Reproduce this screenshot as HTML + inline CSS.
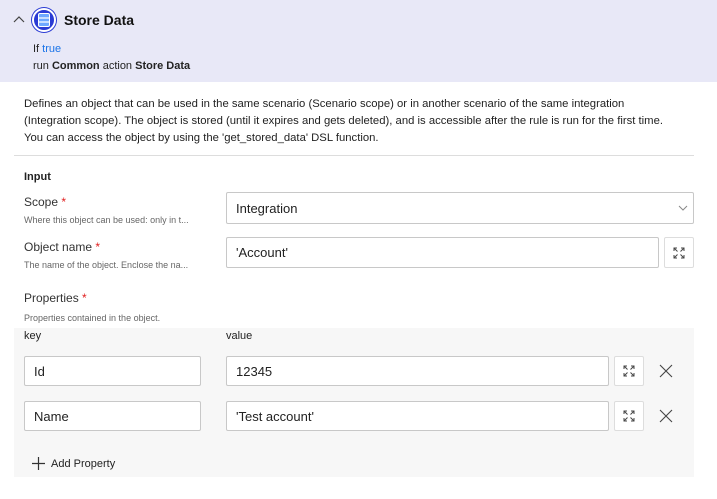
<!DOCTYPE html>
<html><head><style>
*{box-sizing:border-box;margin:0;padding:0}
body{width:717px;height:499px;background:#fff;font-family:"Liberation Sans",sans-serif;color:#222;position:relative;overflow:hidden}
.a{position:absolute}
.hdr{left:0;top:0;width:717px;height:82px;background:#e8e8f7}
.box{position:absolute;border:1px solid #c8c8c8;border-radius:2px;background:#fff;font-size:13px;padding-left:9px;display:flex;align-items:center;color:#222}
.btn{position:absolute;border:1px solid #ddd;border-radius:2px;background:#fff;display:flex;align-items:center;justify-content:center}
.lbl{font-size:12px;color:#333}
.sub{font-size:9px;color:#666}
.req{color:#e02020}
</style></head><body>
<div class="a hdr"></div>
<svg class="a" style="left:13px;top:14px" width="12" height="10" viewBox="0 0 12 10"><path d="M1 8L6 3L11 8" fill="none" stroke="#444" stroke-width="1.2"/></svg>
<div class="a" style="left:32px;top:8px;width:24px;height:24px;border-radius:50%;background:#2a3bd4;border:2px solid #fff;box-shadow:0 0 0 1px #2a3bd4"></div>
<svg class="a" style="left:38px;top:13px" width="12" height="14" viewBox="0 0 12 14"><rect x="0.5" y="0.5" width="11" height="13" rx="1.5" fill="#6ea8ff" stroke="#fff"/><path d="M1 5H11M1 9H11" stroke="#fff" stroke-width="1.2"/></svg>
<div class="a" style="left:64px;top:12px;font-size:14px;font-weight:bold;color:#111">Store Data</div>
<div class="a" style="left:33px;top:43px;font-size:11px">If <span style="color:#1a73e8">true</span></div>
<div class="a" style="left:33px;top:60px;font-size:11px">run <b>Common</b> action <b>Store Data</b></div>
<div class="a" style="left:24px;top:96px;font-size:11.3px;line-height:17px;white-space:nowrap;color:#222">Defines an object that can be used in the same scenario (Scenario scope) or in another scenario of the same integration<br>(Integration scope). The object is stored (until it expires and gets deleted), and is accessible after the rule is run for the first time.<br>You can access the object by using the 'get_stored_data' DSL function.</div>
<div class="a" style="left:14px;top:155px;width:680px;height:1px;background:#ddd"></div>
<div class="a" style="left:24px;top:171px;font-size:11px;font-weight:bold">Input</div>
<div class="a lbl" style="left:24px;top:195px">Scope <span class="req">*</span></div>
<div class="a sub" style="left:24px;top:215px">Where this object can be used: only in t...</div>
<div class="box" style="left:226px;top:192px;width:468px;height:32px">Integration</div>
<svg class="a" style="left:678px;top:205px" width="10" height="6" viewBox="0 0 10 6"><path d="M1 1L5 5L9 1" fill="none" stroke="#888"/></svg>
<div class="a lbl" style="left:24px;top:240px">Object name <span class="req">*</span></div>
<div class="a sub" style="left:24px;top:260px">The name of the object. Enclose the na...</div>
<div class="box" style="left:226px;top:237px;width:433px;height:31px">'Account'</div>
<div class="btn" style="left:664px;top:237px;width:30px;height:31px"><svg width="12" height="12" viewBox="0 0 12 12" fill="none" stroke="#444"><path d="M1 4V1H4M1 1L4.5 4.5M8 1H11V4M11 1L7.5 4.5M1 8V11H4M1 11L4.5 7.5M8 11H11V8M11 11L7.5 7.5"/></svg></div>
<div class="a lbl" style="left:24px;top:291px">Properties <span class="req">*</span></div>
<div class="a sub" style="left:24px;top:313px">Properties contained in the object.</div>
<div class="a" style="left:14px;top:328px;width:680px;height:149px;background:#f7f7f7"></div>
<div class="a" style="left:24px;top:330px;font-size:11px">key</div>
<div class="a" style="left:226px;top:330px;font-size:11px">value</div>
<div class="box" style="left:24px;top:356px;width:177px;height:30px">Id</div>
<div class="box" style="left:226px;top:356px;width:383px;height:30px">12345</div>
<div class="btn" style="left:614px;top:356px;width:30px;height:30px"><svg width="12" height="12" viewBox="0 0 12 12" fill="none" stroke="#444"><path d="M1 4V1H4M1 1L4.5 4.5M8 1H11V4M11 1L7.5 4.5M1 8V11H4M1 11L4.5 7.5M8 11H11V8M11 11L7.5 7.5"/></svg></div>
<svg class="a" style="left:659px;top:364px" width="14" height="14" viewBox="0 0 14 14"><path d="M1 1L13 13M13 1L1 13" stroke="#444" stroke-width="1.1"/></svg>
<div class="box" style="left:24px;top:401px;width:177px;height:30px">Name</div>
<div class="box" style="left:226px;top:401px;width:383px;height:30px">'Test account'</div>
<div class="btn" style="left:614px;top:401px;width:30px;height:30px"><svg width="12" height="12" viewBox="0 0 12 12" fill="none" stroke="#444"><path d="M1 4V1H4M1 1L4.5 4.5M8 1H11V4M11 1L7.5 4.5M1 8V11H4M1 11L4.5 7.5M8 11H11V8M11 11L7.5 7.5"/></svg></div>
<svg class="a" style="left:659px;top:409px" width="14" height="14" viewBox="0 0 14 14"><path d="M1 1L13 13M13 1L1 13" stroke="#444" stroke-width="1.1"/></svg>
<svg class="a" style="left:32px;top:457px" width="13" height="13" viewBox="0 0 13 13"><path d="M6.5 0V13M0 6.5H13" stroke="#333" stroke-width="1.2"/></svg>
<div class="a" style="left:51px;top:458px;font-size:11px;color:#222">Add Property</div>
</body></html>
